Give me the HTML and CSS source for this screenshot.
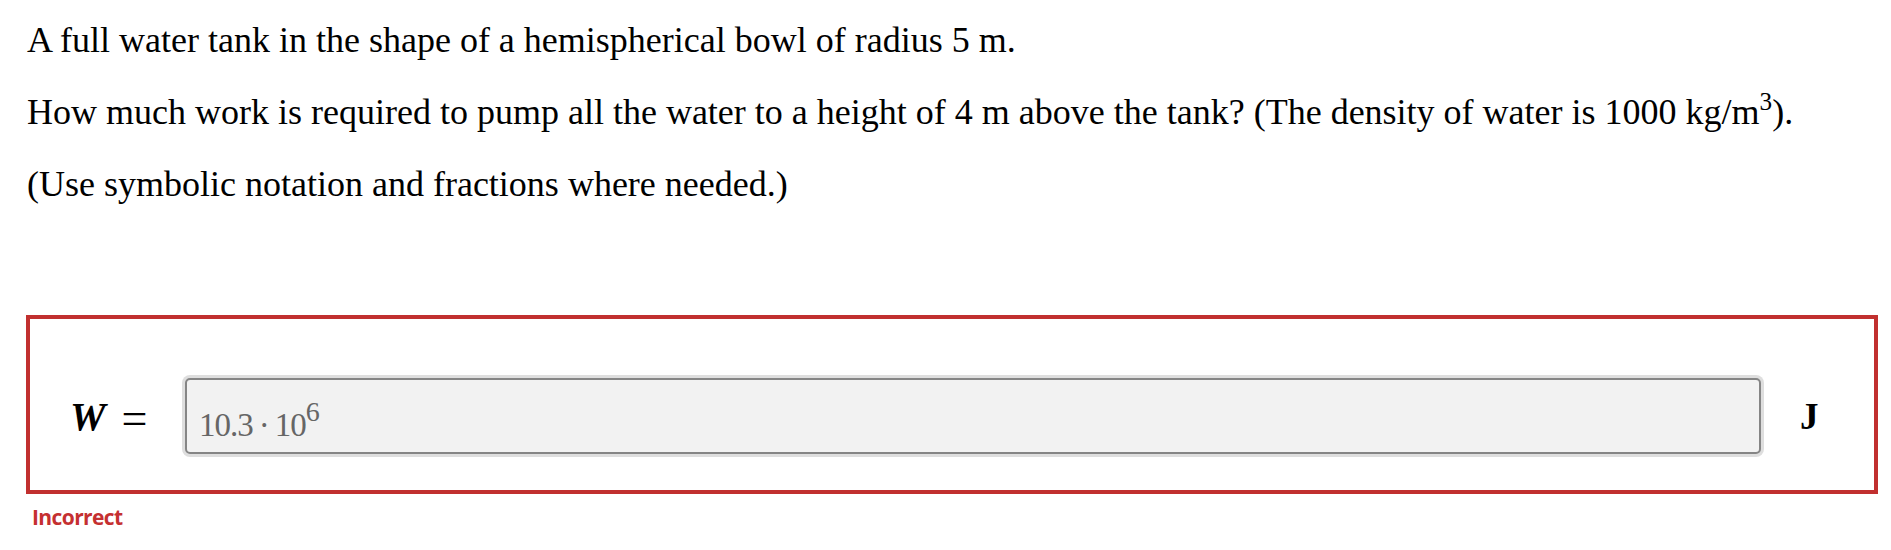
FILE: index.html
```html
<!DOCTYPE html>
<html>
<head>
<meta charset="utf-8">
<link rel="stylesheet" href="styles.css">
</head>
<body>
<main class="page">
  <p class="q">A full water tank in the shape of a hemispherical bowl of radius 5 m.</p>
  <p class="q">How much work is required to pump all the water to a height of 4 m above the tank? (The density of water is 1000 kg/m<sup class="exp">3</sup>).</p>
  <p class="q">(Use symbolic notation and fractions where needed.)</p>
  <section class="answer">
    <div class="row">
      <div class="label"><span class="var">W</span><span class="eq">=</span></div>
      <div class="field"><span class="val">10.3<span class="dot">·</span>10<sup class="pow">6</sup></span></div>
      <div class="unit">J</div>
    </div>
  </section>
  <div class="status">Incorrect</div>
</main>
</body>
</html>
```
FILE: styles.css
```css
html, body {
  margin: 0;
  padding: 0;
  background: #fff;
}
.page {
  padding: 20px 13px 0 26px;
  font-family: "Liberation Serif", "Times New Roman", serif;
  color: #000;
}
.q {
  margin: 0 0 31px 1px;
  font-size: 36px;
  line-height: 41px;
}
.q:last-of-type {
  margin-bottom: 0;
}
.exp {
  font-size: 0.7em;
  line-height: 0;
  vertical-align: 0.55em;
}
.answer {
  margin-top: 110px;
  border: 4px solid #c1302f;
  padding: 59px 0 36px 0;
}
.row {
  display: flex;
  align-items: center;
  height: 76px;
}
.label {
  flex: 0 0 155px;
  box-sizing: border-box;
  padding-left: 40px;
  display: flex;
  align-items: center;
}
.var {
  font-style: italic;
  font-weight: bold;
  font-size: 40px;
}
.eq {
  margin-left: 16px;
  font-size: 46px;
  line-height: 1;
  position: relative;
  top: 3px;
}
.field {
  flex: 1 1 auto;
  height: 76px;
  box-sizing: border-box;
  border: 2px solid #858585;
  border-radius: 5px;
  box-shadow: 0 0 0 3px #dedede;
  background: #f2f2f2;
  padding: 28px 0 0 12px;
  font-size: 33px;
  line-height: 34px;
  letter-spacing: -1px;
  color: #666;
}
.dot {
  margin: 0 6px;
}
.pow {
  font-size: 28px;
  line-height: 0;
  vertical-align: 15px;
}
.unit {
  flex: 0 0 113px;
  box-sizing: border-box;
  padding-left: 39px;
  font-size: 37px;
  font-weight: bold;
}
.status {
  margin-top: 9px;
  padding-left: 6px;
  font-family: "Open Sans", "Noto Sans", sans-serif;
  font-weight: 700;
  font-size: 21px;
  letter-spacing: -0.6px;
  line-height: 28px;
  color: #c53031;
}
```
